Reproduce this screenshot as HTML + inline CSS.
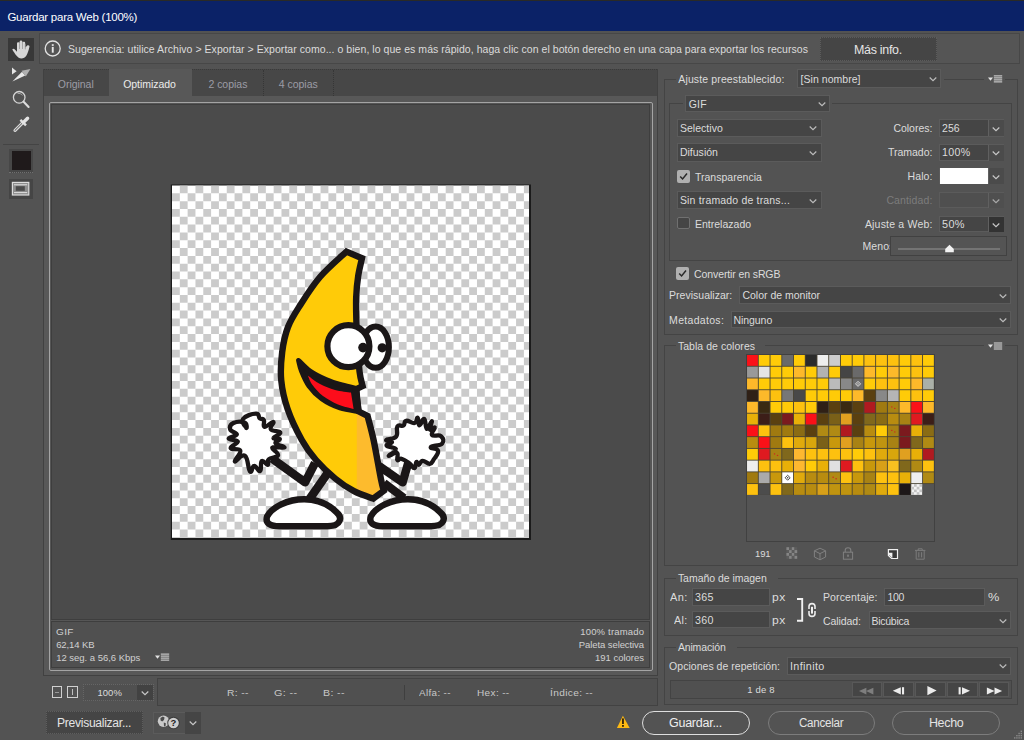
<!DOCTYPE html>
<html lang="es"><head><meta charset="utf-8"><title>Guardar para Web (100%)</title>
<style>
html,body{margin:0;padding:0;}
body{width:1024px;height:740px;overflow:hidden;background:#535353;position:relative;font-family:"Liberation Sans",sans-serif;}
#app div,#app svg.a{position:absolute;}
.t{white-space:pre;}
</style></head><body><div id="app">
<div style="left:0.0px;top:0.0px;width:1024.0px;height:30.5px;background:#0b2267;"></div>
<div style="left:0.0px;top:0.0px;width:1024.0px;height:1.0px;background:#2a2a26;"></div>
<div style="left:8.0px;top:38.0px;width:26.0px;height:22.5px;background:#383838;"></div>
<div style="left:3.2px;top:143.6px;width:35.8px;height:1.2px;background:#444444;"></div>
<div style="left:8.9px;top:148.9px;width:24.2px;height:24.5px;background:#474747;border-bottom:1px dotted #707070;box-sizing:border-box;"></div>
<div style="left:12.0px;top:151.0px;width:18.7px;height:18.8px;background:#1f1a1b;"></div>
<div style="left:8.9px;top:178.8px;width:24.2px;height:20.0px;background:#454545;"></div>
<div style="left:39.0px;top:33.0px;width:981.0px;height:31.0px;background:#555555;border:1px solid #474747;box-sizing:border-box;"></div>
<div style="left:820.0px;top:37.0px;width:117.0px;height:24.0px;background:#454545;border:1px dotted #5c5c5c;box-sizing:border-box;"></div>
<div style="left:43.3px;top:68.5px;width:614.7px;height:607.5px;background:#585858;border:1px solid #414141;box-sizing:border-box;"></div>
<div style="left:44.3px;top:69.0px;width:613.0px;height:27.0px;background:#474747;border-top:1px dotted #3a3a3a;box-sizing:border-box;"></div>
<div style="left:108.8px;top:69.0px;width:83.4px;height:27.5px;background:#585858;"></div>
<div style="left:263.3px;top:70.0px;width:1.0px;height:26.0px;border-left:1px dotted #363636;"></div>
<div style="left:333.0px;top:70.0px;width:1.0px;height:26.0px;border-left:1px dotted #363636;"></div>
<div style="left:49.0px;top:102.0px;width:603.6px;height:568.6px;background:#565656;border:1.6px solid #a4a4a4;box-sizing:border-box;border-radius:2px;"></div>
<div style="left:51.4px;top:104.4px;width:598.8px;height:515.2px;background:#4b4b4b;border:1px solid #3e3e3e;box-sizing:border-box;"></div>
<div style="left:51.4px;top:621.0px;width:598.8px;height:47.2px;background:#505050;border:1px solid #3e3e3e;box-sizing:border-box;"></div>
<svg class="a" style="left:168px;top:182px" width="366" height="361" viewBox="168 182 366 361">
<defs><clipPath id="ban"><path id="banp" d="M346.5 251.6 L362.0 258.2 C361.4 261.2 359.2 269.5 358.2 276.0 C357.2 282.5 356.5 289.3 356.2 297.0 C355.9 304.7 356.2 314.0 356.4 322.0 C356.6 330.0 357.1 336.7 357.6 345.0 C358.1 353.3 358.8 365.2 359.6 372.0 C360.4 378.8 362.1 383.7 362.6 386.0 L355.6 389.5 L358.8 411.5 L367.6 416.0 C368.6 420.2 371.6 430.4 373.8 441.0 C376.0 451.6 379.3 471.0 381.0 479.3 C382.7 487.6 383.3 488.9 383.8 490.8 L373.2 498.6 C370.0 497.4 360.3 494.5 354.0 491.2 C347.7 487.9 341.6 483.8 335.3 478.6 C329.0 473.4 321.6 466.4 316.0 460.0 C310.4 453.6 306.5 448.5 301.8 440.0 C297.1 431.5 291.0 419.0 287.6 409.0 C284.2 399.0 282.1 389.5 281.2 380.0 C280.3 370.5 281.1 360.8 282.2 352.0 C283.3 343.2 285.0 334.8 288.0 327.0 C291.0 319.2 295.0 313.3 300.3 305.0 C305.6 296.7 312.3 285.9 320.0 277.0 C327.7 268.1 342.1 255.8 346.5 251.6 Z"/></clipPath><clipPath id="imc"><rect x="172.0" y="185.5" width="357.0" height="352.3"/></clipPath></defs>
<rect x="170.8" y="184.5" width="360.2" height="355.5" fill="#1b1b1b"/>
<rect x="172.0" y="185.5" width="357.0" height="352.3" fill="#ffffff"/>
<g clip-path="url(#imc)" stroke="#cbcbcb" stroke-width="7.82" stroke-dasharray="7.82 7.82" fill="none"><path d="M172.0 189.41 H536.8" stroke-dashoffset="7.82"/><path d="M172.0 197.23 H536.8" stroke-dashoffset="0"/><path d="M172.0 205.05 H536.8" stroke-dashoffset="7.82"/><path d="M172.0 212.87 H536.8" stroke-dashoffset="0"/><path d="M172.0 220.69 H536.8" stroke-dashoffset="7.82"/><path d="M172.0 228.51 H536.8" stroke-dashoffset="0"/><path d="M172.0 236.33 H536.8" stroke-dashoffset="7.82"/><path d="M172.0 244.15 H536.8" stroke-dashoffset="0"/><path d="M172.0 251.97 H536.8" stroke-dashoffset="7.82"/><path d="M172.0 259.79 H536.8" stroke-dashoffset="0"/><path d="M172.0 267.61 H536.8" stroke-dashoffset="7.82"/><path d="M172.0 275.43 H536.8" stroke-dashoffset="0"/><path d="M172.0 283.25 H536.8" stroke-dashoffset="7.82"/><path d="M172.0 291.07 H536.8" stroke-dashoffset="0"/><path d="M172.0 298.89 H536.8" stroke-dashoffset="7.82"/><path d="M172.0 306.71 H536.8" stroke-dashoffset="0"/><path d="M172.0 314.53 H536.8" stroke-dashoffset="7.82"/><path d="M172.0 322.35 H536.8" stroke-dashoffset="0"/><path d="M172.0 330.17 H536.8" stroke-dashoffset="7.82"/><path d="M172.0 337.99 H536.8" stroke-dashoffset="0"/><path d="M172.0 345.81 H536.8" stroke-dashoffset="7.82"/><path d="M172.0 353.63 H536.8" stroke-dashoffset="0"/><path d="M172.0 361.45 H536.8" stroke-dashoffset="7.82"/><path d="M172.0 369.27 H536.8" stroke-dashoffset="0"/><path d="M172.0 377.09 H536.8" stroke-dashoffset="7.82"/><path d="M172.0 384.91 H536.8" stroke-dashoffset="0"/><path d="M172.0 392.73 H536.8" stroke-dashoffset="7.82"/><path d="M172.0 400.55 H536.8" stroke-dashoffset="0"/><path d="M172.0 408.37 H536.8" stroke-dashoffset="7.82"/><path d="M172.0 416.19 H536.8" stroke-dashoffset="0"/><path d="M172.0 424.01 H536.8" stroke-dashoffset="7.82"/><path d="M172.0 431.83 H536.8" stroke-dashoffset="0"/><path d="M172.0 439.65 H536.8" stroke-dashoffset="7.82"/><path d="M172.0 447.47 H536.8" stroke-dashoffset="0"/><path d="M172.0 455.29 H536.8" stroke-dashoffset="7.82"/><path d="M172.0 463.11 H536.8" stroke-dashoffset="0"/><path d="M172.0 470.93 H536.8" stroke-dashoffset="7.82"/><path d="M172.0 478.75 H536.8" stroke-dashoffset="0"/><path d="M172.0 486.57 H536.8" stroke-dashoffset="7.82"/><path d="M172.0 494.39 H536.8" stroke-dashoffset="0"/><path d="M172.0 502.21 H536.8" stroke-dashoffset="7.82"/><path d="M172.0 510.03 H536.8" stroke-dashoffset="0"/><path d="M172.0 517.85 H536.8" stroke-dashoffset="7.82"/><path d="M172.0 525.67 H536.8" stroke-dashoffset="0"/><path d="M172.0 533.49 H536.8" stroke-dashoffset="7.82"/><path d="M172.0 541.31 H536.8" stroke-dashoffset="0"/></g>
<g fill="none" stroke="#1a1617" stroke-width="8.4" stroke-linejoin="round" stroke-linecap="butt">
<path d="M272 458.5 L305.1 482.4 L315 463"/>
<path d="M327 474 L309.5 499"/>
<path d="M379 466 L402.6 482.4 L408.5 462"/>
<path d="M384 483 L404 498"/>
</g>
<path d="M279.2 526.2 L327.5 526.2 C341.5 526.2 342.5 517.2 336.5 512.2 C326.5 502.2 313.5 499.2 304.2 499.2 C287.2 499.2 272.2 507.2 267.2 516.2 C264.7 523.2 270.2 526.2 279.2 526.2 Z" fill="#ffffff" stroke="#1a1617" stroke-width="6.4" stroke-linejoin="round"/>
<path d="M382.9 526.2 L431.2 526.2 C445.2 526.2 446.2 517.2 440.2 512.2 C430.2 502.2 417.2 499.2 407.9 499.2 C390.9 499.2 375.9 507.2 370.9 516.2 C368.4 523.2 373.9 526.2 382.9 526.2 Z" fill="#ffffff" stroke="#1a1617" stroke-width="6.4" stroke-linejoin="round"/>
<path d="M346.5 251.6 L362.0 258.2 C361.4 261.2 359.2 269.5 358.2 276.0 C357.2 282.5 356.5 289.3 356.2 297.0 C355.9 304.7 356.2 314.0 356.4 322.0 C356.6 330.0 357.1 336.7 357.6 345.0 C358.1 353.3 358.8 365.2 359.6 372.0 C360.4 378.8 362.1 383.7 362.6 386.0 L355.6 389.5 L358.8 411.5 L367.6 416.0 C368.6 420.2 371.6 430.4 373.8 441.0 C376.0 451.6 379.3 471.0 381.0 479.3 C382.7 487.6 383.3 488.9 383.8 490.8 L373.2 498.6 C370.0 497.4 360.3 494.5 354.0 491.2 C347.7 487.9 341.6 483.8 335.3 478.6 C329.0 473.4 321.6 466.4 316.0 460.0 C310.4 453.6 306.5 448.5 301.8 440.0 C297.1 431.5 291.0 419.0 287.6 409.0 C284.2 399.0 282.1 389.5 281.2 380.0 C280.3 370.5 281.1 360.8 282.2 352.0 C283.3 343.2 285.0 334.8 288.0 327.0 C291.0 319.2 295.0 313.3 300.3 305.0 C305.6 296.7 312.3 285.9 320.0 277.0 C327.7 268.1 342.1 255.8 346.5 251.6 Z" fill="#ffcb08"/>
<rect x="356.8" y="414" width="40" height="90" fill="#fdbb2d" clip-path="url(#ban)"/>
<path d="M298.6 360.5 C300.5 362.2 305.4 367.8 310.0 371.0 C314.6 374.2 320.7 377.2 326.0 379.5 C331.3 381.8 336.8 383.5 342.0 385.0 C347.2 386.5 354.5 388.0 357.0 388.6 L358.8 411.5 C355.7 410.9 346.1 410.1 340.0 408.0 C333.9 405.9 327.2 402.7 322.0 399.0 C316.8 395.3 312.4 390.7 309.0 386.0 C305.6 381.3 303.2 375.2 301.5 371.0 C299.8 366.8 299.1 362.2 298.6 360.5 Z" fill="#1a1617" stroke="#1a1617" stroke-width="5" stroke-linejoin="round"/>
<path d="M307.8 375.4 C309.8 376.8 315.5 381.6 320.0 384.0 C324.5 386.4 329.8 388.6 335.0 390.0 C340.2 391.4 348.3 392.2 351.0 392.6 L353.6 409 C351.0 408.2 343.1 406.7 338.0 404.5 C332.9 402.3 327.2 399.2 323.0 396.0 C318.8 392.8 315.0 388.4 312.5 385.0 C310.0 381.6 308.6 377.0 307.8 375.4 Z" fill="#fd0d1b"/>
<path d="M346.5 251.6 L362.0 258.2 C361.4 261.2 359.2 269.5 358.2 276.0 C357.2 282.5 356.5 289.3 356.2 297.0 C355.9 304.7 356.2 314.0 356.4 322.0 C356.6 330.0 357.1 336.7 357.6 345.0 C358.1 353.3 358.8 365.2 359.6 372.0 C360.4 378.8 362.1 383.7 362.6 386.0 L355.6 389.5 L358.8 411.5 L367.6 416.0 C368.6 420.2 371.6 430.4 373.8 441.0 C376.0 451.6 379.3 471.0 381.0 479.3 C382.7 487.6 383.3 488.9 383.8 490.8 L373.2 498.6 C370.0 497.4 360.3 494.5 354.0 491.2 C347.7 487.9 341.6 483.8 335.3 478.6 C329.0 473.4 321.6 466.4 316.0 460.0 C310.4 453.6 306.5 448.5 301.8 440.0 C297.1 431.5 291.0 419.0 287.6 409.0 C284.2 399.0 282.1 389.5 281.2 380.0 C280.3 370.5 281.1 360.8 282.2 352.0 C283.3 343.2 285.0 334.8 288.0 327.0 C291.0 319.2 295.0 313.3 300.3 305.0 C305.6 296.7 312.3 285.9 320.0 277.0 C327.7 268.1 342.1 255.8 346.5 251.6 Z" fill="none" stroke="#1a1617" stroke-width="6.4" stroke-linejoin="miter"/>
<ellipse cx="375.6" cy="347.2" rx="13.3" ry="20.6" fill="#ffffff" stroke="#1a1617" stroke-width="6"/>
<circle cx="382.2" cy="347.8" r="4.6" fill="#1a1617"/>
<circle cx="348.4" cy="346.2" r="21" fill="#ffffff" stroke="#1a1617" stroke-width="6.2"/>
<circle cx="363" cy="347.6" r="4.8" fill="#1a1617"/>
<path d="M256.0 413.7 C259.9 413.6 258.0 417.0 259.8 418.4 C261.6 419.9 262.7 418.0 263.8 420.0 C265.0 421.9 262.4 426.4 264.6 426.8 C266.8 427.3 271.8 421.4 273.3 422.0 C274.7 422.6 269.3 426.9 270.9 429.4 C272.6 431.9 279.8 430.6 280.3 432.6 C280.9 434.6 273.6 436.5 273.5 438.0 C273.3 439.5 279.3 438.0 279.8 439.2 C280.3 440.4 274.5 441.3 275.6 443.3 C276.7 445.2 285.1 446.6 284.4 447.6 C283.7 448.6 273.9 445.8 272.4 447.6 C271.0 449.4 278.9 452.5 278.0 455.2 C277.1 457.9 271.1 457.0 268.7 459.3 C266.3 461.5 269.3 464.4 267.7 464.8 C266.1 465.2 263.6 459.6 261.8 461.0 C260.0 462.4 261.9 469.8 260.1 470.9 C258.3 472.1 256.6 465.7 254.2 465.9 C251.8 466.0 252.1 473.8 250.0 471.4 C247.8 469.1 248.4 458.1 244.9 455.7 C241.3 453.4 235.8 462.5 234.8 461.3 C233.7 460.1 241.3 453.7 240.3 450.7 C239.4 447.6 231.3 450.3 230.7 448.1 C230.1 446.0 238.3 443.8 237.8 441.5 C237.3 439.3 228.9 440.2 228.7 438.5 C228.4 436.8 236.4 436.6 236.8 434.4 C237.1 432.3 231.0 432.1 230.2 429.4 C229.4 426.7 230.1 424.6 233.4 423.0 C236.7 421.4 241.4 421.4 244.4 422.5 C247.4 423.6 246.7 428.7 246.4 427.9 C246.1 427.0 240.8 422.3 243.1 418.9 C245.3 415.6 252.1 413.8 256.0 413.7 Z" fill="#ffffff" stroke="#1a1617" stroke-width="4.3" stroke-linejoin="round"/>
<path d="M417.6 417.7 C418.8 418.3 417.9 425.0 419.4 425.3 C421.0 425.6 422.5 418.2 424.2 419.0 C426.0 419.9 425.2 428.4 426.9 428.9 C428.7 429.3 431.1 420.9 431.8 421.1 C432.5 421.2 429.3 428.1 430.0 429.6 C430.7 431.1 434.4 426.3 434.8 427.6 C435.3 428.8 430.6 432.9 432.0 435.0 C433.4 437.0 438.6 434.2 440.9 436.2 C443.3 438.2 444.5 441.0 442.1 443.6 C439.8 446.1 431.7 445.4 430.8 447.1 C429.8 448.8 437.4 448.0 438.1 450.9 C438.7 453.8 435.6 456.5 433.6 459.6 C431.7 462.6 432.3 463.5 429.8 463.8 C427.2 464.1 425.2 460.6 422.7 460.8 C420.1 461.0 420.3 464.6 418.8 464.8 C417.4 465.1 417.4 461.2 416.4 462.0 C415.4 462.8 416.0 467.8 414.4 468.1 C412.7 468.4 412.3 465.5 409.3 463.3 C406.3 461.1 404.4 459.5 401.6 458.8 C398.8 458.0 398.4 461.4 397.4 460.0 C396.3 458.6 399.0 453.9 397.0 452.9 C394.9 451.9 389.0 456.6 388.7 455.7 C388.5 454.9 396.3 451.7 395.8 449.3 C395.4 447.0 387.6 447.5 386.7 445.8 C385.8 444.1 392.1 443.6 392.0 442.2 C391.9 440.9 385.2 441.3 386.2 440.0 C387.2 438.7 393.5 439.8 396.1 436.7 C398.7 433.5 395.7 429.1 397.4 426.5 C399.1 423.9 401.4 426.9 403.4 425.5 C405.5 424.2 403.6 421.4 406.2 420.8 C408.8 420.2 411.9 423.7 414.6 423.0 C417.3 422.3 416.5 417.2 417.6 417.7 Z" fill="#ffffff" stroke="#1a1617" stroke-width="4.3" stroke-linejoin="round"/>
</svg>
<div style="left:51.5px;top:686.0px;width:10.5px;height:12.0px;border:1px solid #d0d0d0;box-sizing:border-box;"></div>
<div style="left:54.5px;top:691.5px;width:4.5px;height:1.0px;background:#9a9a9a;"></div>
<div style="left:67.0px;top:686.0px;width:10.5px;height:12.0px;border:1px solid #d0d0d0;box-sizing:border-box;"></div>
<div style="left:71.8px;top:689.0px;width:1.0px;height:6.0px;background:#c0c0c0;"></div>
<div style="left:83.0px;top:684.0px;width:70.5px;height:16.5px;background:#505050;border:1px dotted #666;box-sizing:border-box;"></div>
<div style="left:137.4px;top:684.5px;width:15.6px;height:15.5px;background:#424242;"></div>
<div style="left:157.0px;top:678.0px;width:501.0px;height:27.5px;background:#505050;border:1px solid #424242;box-sizing:border-box;"></div>
<div style="left:404.0px;top:684.5px;width:1.0px;height:15.5px;background:#3f3f3f;"></div>
<div style="left:45.8px;top:710.6px;width:97.4px;height:23.8px;background:#454545;border:1px dotted #5e5e5e;box-sizing:border-box;"></div>
<div style="left:152.6px;top:711.6px;width:48.4px;height:22.6px;background:#505050;border:1px solid #5b5b5b;box-sizing:border-box;"></div>
<div style="left:185.0px;top:712.2px;width:15.6px;height:21.4px;background:#454545;"></div>
<div style="left:663.8px;top:78.5px;width:1.0px;height:256.0px;background:#444444;"></div>
<div style="left:1017.0px;top:78.5px;width:1.0px;height:256.0px;background:#444444;"></div>
<div style="left:663.8px;top:333.5px;width:354.2px;height:1.0px;background:#444444;"></div>
<div style="left:663.8px;top:78.5px;width:11.9px;height:1.0px;background:#444444;"></div>
<div style="left:944.0px;top:78.5px;width:40.0px;height:1.0px;background:#444444;"></div>
<div style="left:1005.0px;top:78.5px;width:13.0px;height:1.0px;background:#444444;"></div>
<div style="left:669.0px;top:103.3px;width:1.0px;height:157.4px;background:#444444;"></div>
<div style="left:1011.4px;top:103.3px;width:1.0px;height:157.4px;background:#444444;"></div>
<div style="left:669.0px;top:259.7px;width:343.4px;height:1.0px;background:#444444;"></div>
<div style="left:669.0px;top:103.3px;width:14.0px;height:1.0px;background:#444444;"></div>
<div style="left:832.0px;top:103.3px;width:180.4px;height:1.0px;background:#444444;"></div>
<div style="left:663.8px;top:345.4px;width:1.0px;height:221.0px;background:#444444;"></div>
<div style="left:1017.0px;top:345.4px;width:1.0px;height:221.0px;background:#444444;"></div>
<div style="left:663.8px;top:565.4px;width:354.2px;height:1.0px;background:#444444;"></div>
<div style="left:663.8px;top:345.4px;width:11.9px;height:1.0px;background:#444444;"></div>
<div style="left:765.4px;top:345.4px;width:218.6px;height:1.0px;background:#444444;"></div>
<div style="left:1005.0px;top:345.4px;width:13.0px;height:1.0px;background:#444444;"></div>
<div style="left:663.8px;top:577.5px;width:1.0px;height:58.2px;background:#444444;"></div>
<div style="left:1017.0px;top:577.5px;width:1.0px;height:58.2px;background:#444444;"></div>
<div style="left:663.8px;top:634.7px;width:354.2px;height:1.0px;background:#444444;"></div>
<div style="left:663.8px;top:577.5px;width:11.9px;height:1.0px;background:#444444;"></div>
<div style="left:778.0px;top:577.5px;width:240.0px;height:1.0px;background:#444444;"></div>
<div style="left:663.8px;top:647.2px;width:1.0px;height:58.2px;background:#444444;"></div>
<div style="left:1017.0px;top:647.2px;width:1.0px;height:58.2px;background:#444444;"></div>
<div style="left:663.8px;top:704.4px;width:354.2px;height:1.0px;background:#444444;"></div>
<div style="left:663.8px;top:647.2px;width:11.9px;height:1.0px;background:#444444;"></div>
<div style="left:737.0px;top:647.2px;width:281.0px;height:1.0px;background:#444444;"></div>
<div style="left:796.6px;top:69.0px;width:144.8px;height:19.3px;background:#454545;border:1px solid #5b5b5b;box-sizing:border-box;"></div>
<svg class="a" style="left:928.1px;top:75.2px" width="10" height="8" viewBox="0 0 10 8"><path d="M1.7 2.5 L5 5.7 L8.3 2.5" fill="none" stroke="#bcbcbc" stroke-width="1.15"/></svg>
<div style="left:685.0px;top:94.8px;width:145.3px;height:17.6px;background:#454545;border:1px solid #5b5b5b;box-sizing:border-box;"></div>
<svg class="a" style="left:817.0px;top:100.1px" width="10" height="8" viewBox="0 0 10 8"><path d="M1.7 2.5 L5 5.7 L8.3 2.5" fill="none" stroke="#bcbcbc" stroke-width="1.15"/></svg>
<div style="left:676.5px;top:118.6px;width:145.0px;height:18.4px;background:#454545;border:1px solid #5b5b5b;box-sizing:border-box;"></div>
<svg class="a" style="left:808.2px;top:124.3px" width="10" height="8" viewBox="0 0 10 8"><path d="M1.7 2.5 L5 5.7 L8.3 2.5" fill="none" stroke="#bcbcbc" stroke-width="1.15"/></svg>
<div style="left:676.5px;top:143.2px;width:145.0px;height:18.4px;background:#454545;border:1px solid #5b5b5b;box-sizing:border-box;"></div>
<svg class="a" style="left:808.2px;top:148.9px" width="10" height="8" viewBox="0 0 10 8"><path d="M1.7 2.5 L5 5.7 L8.3 2.5" fill="none" stroke="#bcbcbc" stroke-width="1.15"/></svg>
<div style="left:676.5px;top:191.2px;width:145.0px;height:18.2px;background:#454545;border:1px solid #5b5b5b;box-sizing:border-box;"></div>
<svg class="a" style="left:808.2px;top:196.8px" width="10" height="8" viewBox="0 0 10 8"><path d="M1.7 2.5 L5 5.7 L8.3 2.5" fill="none" stroke="#bcbcbc" stroke-width="1.15"/></svg>
<div style="left:739.4px;top:286.2px;width:272.0px;height:18.2px;background:#454545;border:1px solid #5b5b5b;box-sizing:border-box;"></div>
<svg class="a" style="left:998.1px;top:291.8px" width="10" height="8" viewBox="0 0 10 8"><path d="M1.7 2.5 L5 5.7 L8.3 2.5" fill="none" stroke="#bcbcbc" stroke-width="1.15"/></svg>
<div style="left:730.6px;top:310.6px;width:280.8px;height:17.8px;background:#454545;border:1px solid #5b5b5b;box-sizing:border-box;"></div>
<svg class="a" style="left:998.1px;top:316.0px" width="10" height="8" viewBox="0 0 10 8"><path d="M1.7 2.5 L5 5.7 L8.3 2.5" fill="none" stroke="#bcbcbc" stroke-width="1.15"/></svg>
<div style="left:868.5px;top:611.4px;width:142.9px;height:18.0px;background:#454545;border:1px solid #5b5b5b;box-sizing:border-box;"></div>
<svg class="a" style="left:998.1px;top:616.9px" width="10" height="8" viewBox="0 0 10 8"><path d="M1.7 2.5 L5 5.7 L8.3 2.5" fill="none" stroke="#bcbcbc" stroke-width="1.15"/></svg>
<div style="left:786.8px;top:656.6px;width:224.6px;height:18.2px;background:#454545;border:1px solid #5b5b5b;box-sizing:border-box;"></div>
<svg class="a" style="left:998.1px;top:662.2px" width="10" height="8" viewBox="0 0 10 8"><path d="M1.7 2.5 L5 5.7 L8.3 2.5" fill="none" stroke="#bcbcbc" stroke-width="1.15"/></svg>
<div style="left:939.2px;top:119.4px;width:65.0px;height:17.4px;background:#454545;border:1px solid #5b5b5b;box-sizing:border-box;"></div>
<div style="left:988.2px;top:119.9px;width:15.5px;height:16.4px;background:#4b4b4b;border-left:1px solid #606060;box-sizing:border-box;"></div>
<svg class="a" style="left:991.2px;top:124.6px" width="10" height="8" viewBox="0 0 10 8"><path d="M1.7 2.5 L5 5.7 L8.3 2.5" fill="none" stroke="#c8c8c8" stroke-width="1.15"/></svg>
<div style="left:939.2px;top:144.0px;width:65.0px;height:17.0px;background:#454545;border:1px solid #5b5b5b;box-sizing:border-box;"></div>
<div style="left:988.2px;top:144.5px;width:15.5px;height:16.0px;background:#4b4b4b;border-left:1px solid #606060;box-sizing:border-box;"></div>
<svg class="a" style="left:991.2px;top:149.0px" width="10" height="8" viewBox="0 0 10 8"><path d="M1.7 2.5 L5 5.7 L8.3 2.5" fill="none" stroke="#c8c8c8" stroke-width="1.15"/></svg>
<div style="left:939.2px;top:167.6px;width:65.0px;height:16.8px;background:#454545;border:1px solid #5b5b5b;box-sizing:border-box;"></div>
<div style="left:988.2px;top:168.1px;width:15.5px;height:15.8px;background:#4b4b4b;border-left:1px solid #606060;box-sizing:border-box;"></div>
<svg class="a" style="left:991.2px;top:172.5px" width="10" height="8" viewBox="0 0 10 8"><path d="M1.7 2.5 L5 5.7 L8.3 2.5" fill="none" stroke="#c8c8c8" stroke-width="1.15"/></svg>
<div style="left:939.8px;top:168.0px;width:48.4px;height:16.0px;background:#ffffff;"></div>
<div style="left:939.2px;top:192.0px;width:65.0px;height:16.4px;background:#4f4f4f;border:1px solid #5b5b5b;box-sizing:border-box;"></div>
<div style="left:988.2px;top:192.5px;width:15.5px;height:15.4px;background:#4f4f4f;border-left:1px solid #606060;box-sizing:border-box;"></div>
<svg class="a" style="left:991.2px;top:196.7px" width="10" height="8" viewBox="0 0 10 8"><path d="M1.7 2.5 L5 5.7 L8.3 2.5" fill="none" stroke="#a8a8a8" stroke-width="1.15"/></svg>
<div style="left:939.2px;top:216.0px;width:65.0px;height:16.4px;background:#454545;border:1px solid #5b5b5b;box-sizing:border-box;"></div>
<div style="left:988.2px;top:216.5px;width:15.5px;height:15.4px;background:#333333;border-left:1px solid #606060;box-sizing:border-box;"></div>
<svg class="a" style="left:991.2px;top:220.7px" width="10" height="8" viewBox="0 0 10 8"><path d="M1.7 2.5 L5 5.7 L8.3 2.5" fill="none" stroke="#c8c8c8" stroke-width="1.15"/></svg>
<div style="left:890.4px;top:236.0px;width:116.4px;height:20.0px;background:#545454;border:1px solid #414141;box-sizing:border-box;"></div>
<div style="left:898.2px;top:248.2px;width:101.4px;height:1.6px;background:#747474;"></div>
<svg class="a" style="left:943.5px;top:244px" width="11" height="9" viewBox="0 0 11 9"><path d="M5.5 0.8 L9.8 5 L9.8 8.2 L1.2 8.2 L1.2 5 Z" fill="#f2f2f2"/></svg>
<div style="left:676.6px;top:170.2px;width:13.1px;height:12.4px;background:#b0b0b0;border-radius:2px;"></div>
<svg class="a" style="left:676.6px;top:170.2px" width="13" height="13" viewBox="0 0 13 13"><path d="M3.2 6.4 L5.6 8.9 L10 3.6" fill="none" stroke="#2a2a2a" stroke-width="1.5"/></svg>
<div style="left:676.6px;top:217.0px;width:13.0px;height:12.4px;background:#454545;border:1px solid #707070;border-radius:2px;box-sizing:border-box;"></div>
<div style="left:676.0px;top:267.3px;width:13.1px;height:12.4px;background:#b0b0b0;border-radius:2px;"></div>
<svg class="a" style="left:676.0px;top:267.3px" width="13" height="13" viewBox="0 0 13 13"><path d="M3.2 6.4 L5.6 8.9 L10 3.6" fill="none" stroke="#2a2a2a" stroke-width="1.5"/></svg>
<div style="left:692.1px;top:588.0px;width:77.5px;height:17.6px;background:#454545;border:1px solid #5b5b5b;box-sizing:border-box;"></div>
<div style="left:692.1px;top:610.5px;width:77.5px;height:17.7px;background:#454545;border:1px solid #5b5b5b;box-sizing:border-box;"></div>
<div style="left:883.6px;top:588.0px;width:101.0px;height:17.6px;background:#454545;border:1px solid #5b5b5b;box-sizing:border-box;"></div>
<div style="left:670.2px;top:680.4px;width:341.8px;height:19.0px;background:#505050;border:1px solid #434343;box-sizing:border-box;"></div>
<div style="left:851.9px;top:681.8px;width:30.3px;height:15.6px;background:#454545;border:1px solid #585858;box-sizing:border-box;"></div>
<div style="left:883.2px;top:681.8px;width:31.0px;height:15.6px;background:#454545;border:1px solid #585858;box-sizing:border-box;"></div>
<div style="left:915.4px;top:681.8px;width:30.6px;height:15.6px;background:#454545;border:1px solid #585858;box-sizing:border-box;"></div>
<div style="left:947.0px;top:681.8px;width:30.7px;height:15.6px;background:#454545;border:1px solid #585858;box-sizing:border-box;"></div>
<div style="left:978.9px;top:681.8px;width:30.6px;height:15.6px;background:#454545;border:1px solid #585858;box-sizing:border-box;"></div>
<div style="left:642.0px;top:710.5px;width:108.2px;height:24.4px;border:1.6px solid #dedede;box-sizing:border-box;border-radius:12.2px;"></div>
<div style="left:767.9px;top:710.5px;width:107.4px;height:24.4px;border:1.2px solid #7c7c7c;box-sizing:border-box;border-radius:12.2px;"></div>
<div style="left:892.4px;top:710.5px;width:108.0px;height:24.4px;border:1.2px solid #7c7c7c;box-sizing:border-box;border-radius:12.2px;"></div>
<svg class="a" style="left:8px;top:38px" width="26" height="22" viewBox="8 38 26 22"><path d="M12.3 49.4 C12.8 48.4 14 48.6 14.6 49.2 L17 51.8 L17 43.4 C17 41.8 19.4 41.8 19.4 43.4 L19.6 42 C19.6 40 22.4 40 22.4 42 L22.6 43.2 C22.6 41.4 25.2 41.4 25.2 43.2 L25.4 47.6 L27.2 45.6 C28.2 44.6 30 45.4 29.4 47 C28.6 50.5 27.8 53 26.6 55.2 C25.2 57.6 23.4 58.5 21.4 58.5 C19.4 58.5 17.8 57.4 16.6 55.8 C15.2 54 13.6 51.6 12.3 49.4 Z" fill="#d6d6d6"/><path d="M19.5 43.2 V49 M22.5 42.6 V49 M25.3 44 V49.4" stroke="#8c8c8c" stroke-width="0.7" fill="none"/></svg>
<svg class="a" style="left:43px;top:39px" width="20" height="20" viewBox="43 39 20 20"><circle cx="52.7" cy="48.5" r="7.5" fill="none" stroke="#e2e2e2" stroke-width="1.3"/><rect x="51.8" y="46.9" width="1.9" height="5.8" fill="#e8e8e8"/><rect x="51.8" y="44.2" width="1.9" height="1.7" fill="#e8e8e8"/></svg>
<svg class="a" style="left:10px;top:66px" width="22" height="18" viewBox="10 66 22 18"><path d="M12 67.6 L16.6 71.2 L12 74.4 Z" fill="#e4e4e4"/><path d="M12.4 81.6 L22 71.8 L25.2 75.6 Z" fill="#e8e8e8"/><path d="M21.6 70.8 L30.4 69 L25.8 76.6 Z" fill="#b0b0b0"/></svg>
<svg class="a" style="left:11px;top:89px" width="20" height="20" viewBox="11 89 20 20"><circle cx="19.2" cy="97.3" r="5.8" fill="none" stroke="#d4d4d4" stroke-width="1.3"/><path d="M23.6 101.8 L28.6 107" stroke="#dcdcdc" stroke-width="2.1" stroke-linecap="round"/><path d="M17.6 93.6 C19.4 93 21.4 93.8 22.4 95.4" stroke="#bdbdbd" stroke-width="0.8" fill="none"/></svg>
<svg class="a" style="left:11px;top:115px" width="20" height="18" viewBox="11 115 20 18"><path d="M22.4 121.6 L14.4 129.6 C13.4 130.8 14.6 132 15.8 131 L23.8 123" fill="none" stroke="#dcdcdc" stroke-width="1.2"/><path d="M20.4 119.8 L26 125.4" stroke="#e0e0e0" stroke-width="2.4"/><path d="M23.4 122.4 L27.6 118.2" stroke="#e4e4e4" stroke-width="3.4" stroke-linecap="round"/></svg>
<svg class="a" style="left:11px;top:181px" width="19" height="15" viewBox="11 181 19 15"><rect x="12.4" y="182.4" width="16.4" height="12.6" fill="#8d8d8d" stroke="#dcdcdc" stroke-width="1.2"/><rect x="14" y="184.2" width="13.2" height="1.1" fill="#d8d8d8"/><rect x="14" y="192" width="13.2" height="1.1" fill="#d8d8d8"/><rect x="15.8" y="186.2" width="9" height="4.6" fill="#4a4a4a"/></svg>
<svg class="a" style="left:986.7px;top:73.6px" width="17" height="10" viewBox="986.7 73.6 17 10"><path d="M987.7 77.0 L992.7 77.0 L990.2 80.39999999999999 Z" fill="#e2e2e2"/><rect x="993.5" y="75" width="8.4" height="1" fill="#dedede"/><rect x="993.5" y="77" width="8.4" height="1" fill="#dedede"/><rect x="993.5" y="79" width="8.4" height="1" fill="#dedede"/><rect x="993.5" y="81" width="8.4" height="1" fill="#dedede"/></svg>
<svg class="a" style="left:986.7px;top:340.5px" width="17" height="10" viewBox="986.7 340.5 17 10"><path d="M987.7 343.9 L992.7 343.9 L990.2 347.3 Z" fill="#e2e2e2"/><rect x="993.5" y="342" width="8.4" height="1" fill="#dedede"/><rect x="993.5" y="344" width="8.4" height="1" fill="#dedede"/><rect x="993.5" y="346" width="8.4" height="1" fill="#dedede"/><rect x="993.5" y="348" width="8.4" height="1" fill="#dedede"/></svg>
<svg class="a" style="left:154.4px;top:652.4px" width="17" height="10" viewBox="154.4 652.4 17 10"><path d="M155.4 655.8 L160.4 655.8 L157.9 659.1999999999999 Z" fill="#e2e2e2"/><rect x="161.20000000000002" y="654" width="8.4" height="1" fill="#dedede"/><rect x="161.20000000000002" y="656" width="8.4" height="1" fill="#dedede"/><rect x="161.20000000000002" y="658" width="8.4" height="1" fill="#dedede"/><rect x="161.20000000000002" y="660" width="8.4" height="1" fill="#dedede"/></svg>
<svg class="a" style="left:786px;top:547px" width="12" height="12" viewBox="786 547 12 12"><rect x="786.4" y="547.2" width="2.7" height="2.9" fill="#858585"/><rect x="786.4" y="550.1" width="2.7" height="2.9" fill="#5c5c5c"/><rect x="786.4" y="553.0" width="2.7" height="2.9" fill="#858585"/><rect x="786.4" y="555.9" width="2.7" height="2.9" fill="#5c5c5c"/><rect x="789.1" y="547.2" width="2.7" height="2.9" fill="#5c5c5c"/><rect x="789.1" y="550.1" width="2.7" height="2.9" fill="#858585"/><rect x="789.1" y="553.0" width="2.7" height="2.9" fill="#5c5c5c"/><rect x="789.1" y="555.9" width="2.7" height="2.9" fill="#858585"/><rect x="791.8" y="547.2" width="2.7" height="2.9" fill="#858585"/><rect x="791.8" y="550.1" width="2.7" height="2.9" fill="#5c5c5c"/><rect x="791.8" y="553.0" width="2.7" height="2.9" fill="#858585"/><rect x="791.8" y="555.9" width="2.7" height="2.9" fill="#5c5c5c"/><rect x="794.5" y="547.2" width="2.7" height="2.9" fill="#5c5c5c"/><rect x="794.5" y="550.1" width="2.7" height="2.9" fill="#858585"/><rect x="794.5" y="553.0" width="2.7" height="2.9" fill="#5c5c5c"/><rect x="794.5" y="555.9" width="2.7" height="2.9" fill="#858585"/></svg>
<svg class="a" style="left:813px;top:547px" width="14" height="14" viewBox="813 547 14 14"><path d="M820 548.2 L825.6 550.8 V557 L820 559.8 L814.4 557 V550.8 Z M814.4 550.8 L820 553.6 L825.6 550.8 M820 553.6 V559.8" fill="none" stroke="#808080" stroke-width="1"/></svg>
<svg class="a" style="left:842px;top:547px" width="12" height="14" viewBox="842 547 12 14"><rect x="843.4" y="552.2" width="9.2" height="7" fill="none" stroke="#808080" stroke-width="1"/><path d="M845.2 552 V550.2 C845.2 547 850.8 547 850.8 550.2 V552" fill="none" stroke="#808080" stroke-width="1.1"/><rect x="847.2" y="554.6" width="1.6" height="2.2" fill="#808080"/></svg>
<svg class="a" style="left:887px;top:548px" width="12" height="12" viewBox="887 548 12 12"><path d="M888.4 549.6 H897.5 V558.5 H891.6 L888.4 555.4 Z" fill="#3a3a3a" stroke="#f0f0f0" stroke-width="1.2"/><path d="M889 552.8 H892.4 V558 L889 555 Z" fill="#f0f0f0"/></svg>
<svg class="a" style="left:914px;top:547px" width="13" height="14" viewBox="914 547 13 14"><path d="M915 550.4 H925.4 M918.2 550.2 V548.8 H922.2 V550.2 M916.2 550.6 V559.2 H924.2 V550.6 M918.8 552.2 V557.4 M921.6 552.2 V557.4" fill="none" stroke="#7c7c7c" stroke-width="1"/></svg>
<svg class="a" style="left:796px;top:597px" width="22" height="26" viewBox="796 597 22 26"><path d="M797 599 H802.2 V620.8 H797" fill="none" stroke="#f0f0f0" stroke-width="1.9"/><path d="M809 609 V606.6 C809 602.6 815 602.6 815 606.6 V609 M809 611 V613.4 C809 617.4 815 617.4 815 613.4 V611" fill="none" stroke="#ececec" stroke-width="1.6"/><rect x="811" y="606.8" width="2" height="6.8" fill="#f0f0f0"/></svg>
<svg class="a" style="left:850px;top:682px" width="162" height="16" viewBox="850 682 162 16"><path d="M866.4 687.8 L859 691.0999999999999 L866.4 694.4 Z" fill="#7e7e7e"/><path d="M873.4 687.8 L866 691.0999999999999 L873.4 694.4 Z" fill="#7e7e7e"/><path d="M900.8 687.2 L892.8 690.8 L900.8 694.4 Z" fill="#ececec"/><rect x="902" y="687.2" width="2.1" height="7.2" fill="#ececec"/><path d="M927.4 686 L936.6 690.6 L927.4 695.2 Z" fill="#ececec"/><rect x="958.6" y="687.2" width="2.1" height="7.2" fill="#ececec"/><path d="M962 687.2 L970 690.8 L962 694.4 Z" fill="#ececec"/><path d="M986.9 687.4 L994.5 690.9 L986.9 694.4 Z" fill="#ececec"/><path d="M994.5 687.4 L1002.1 690.9 L994.5 694.4 Z" fill="#ececec"/></svg>
<svg class="a" style="left:156px;top:714px" width="26" height="18" viewBox="156 714 26 18"><circle cx="163.5" cy="721.2" r="5.7" fill="#c9c9c9"/><path d="M160.4 718 L162.8 716.6 L164.6 717.4 L164 720 L162.2 721.6 L160.6 720.4 Z M163.8 722.4 L165.8 723.2 L165.6 725.8 L164 726.4 Z" fill="#4a4a4a"/><circle cx="173.5" cy="723" r="6.2" fill="#3a3a3a"/><circle cx="173.5" cy="723" r="5.3" fill="#cdcdcd"/><text x="173.5" y="726.4" font-size="9.5" font-weight="bold" text-anchor="middle" fill="#1a1a1a" font-family="Liberation Sans, sans-serif">?</text></svg>
<svg class="a" style="left:187.5px;top:719px" width="10" height="8" viewBox="0 0 10 8"><path d="M1.7 2.5 L5 5.7 L8.3 2.5" fill="none" stroke="#c8c8c8" stroke-width="1.15"/></svg>
<svg class="a" style="left:140.4px;top:688.6px" width="10" height="8" viewBox="0 0 10 8"><path d="M1.7 2.5 L5 5.7 L8.3 2.5" fill="none" stroke="#c8c8c8" stroke-width="1.15"/></svg>
<svg class="a" style="left:616px;top:714px" width="15" height="15" viewBox="616 714 15 15"><path d="M622.9 715.8 L629.7 728 H616.9 Z" fill="#fdb913"/><rect x="622" y="718.4" width="1.9" height="5.6" fill="#3a2808"/><rect x="622" y="725" width="1.9" height="1.8" fill="#3a2808"/></svg>
<svg class="a" style="left:1012px;top:730px" width="12" height="10" viewBox="1012 730 12 10"><rect x="1020.6" y="737.2" width="1.4" height="1.4" fill="#8a8a8a"/><rect x="1020.6" y="735.0" width="1.4" height="1.4" fill="#8a8a8a"/><rect x="1020.6" y="732.8" width="1.4" height="1.4" fill="#8a8a8a"/><rect x="1020.6" y="730.6" width="1.4" height="1.4" fill="#8a8a8a"/><rect x="1018.4" y="737.2" width="1.4" height="1.4" fill="#8a8a8a"/><rect x="1018.4" y="735.0" width="1.4" height="1.4" fill="#8a8a8a"/><rect x="1018.4" y="732.8" width="1.4" height="1.4" fill="#8a8a8a"/><rect x="1016.2" y="737.2" width="1.4" height="1.4" fill="#8a8a8a"/><rect x="1016.2" y="735.0" width="1.4" height="1.4" fill="#8a8a8a"/><rect x="1014.0" y="737.2" width="1.4" height="1.4" fill="#8a8a8a"/></svg>
<div style="left:746.4px;top:354px;width:188.8px;height:188px;background:#545454;border:1px solid #414141;box-sizing:border-box;"></div>
<div style="left:747.1px;top:354.7px;width:187.0px;height:129.1px;background:#4a4434;"></div>
<div style="left:747.1px;top:483.3px;width:175.2px;height:11.7px;background:#4a4434;"></div>
<svg class="a" style="left:747.1px;top:354.7px" width="187.8" height="140.8" viewBox="0 0 187.76 140.82"><rect x="0.00" y="0.00" width="10.83" height="10.83" fill="#fb1118"/><rect x="11.73" y="0.00" width="10.83" height="10.83" fill="#ffcb08"/><rect x="23.47" y="0.00" width="10.83" height="10.83" fill="#ffcb08"/><rect x="35.20" y="0.00" width="10.83" height="10.83" fill="#6a6a6a"/><rect x="46.94" y="0.00" width="10.83" height="10.83" fill="#ffcb08"/><rect x="58.67" y="0.00" width="10.83" height="10.83" fill="#2b2b2b"/><rect x="70.41" y="0.00" width="10.83" height="10.83" fill="#eeeeee"/><rect x="82.14" y="0.00" width="10.83" height="10.83" fill="#cccccc"/><rect x="93.88" y="0.00" width="10.83" height="10.83" fill="#ffcb08"/><rect x="105.61" y="0.00" width="10.83" height="10.83" fill="#ffcb08"/><rect x="117.35" y="0.00" width="10.83" height="10.83" fill="#fdc10f"/><rect x="129.08" y="0.00" width="10.83" height="10.83" fill="#fdc10f"/><rect x="140.82" y="0.00" width="10.83" height="10.83" fill="#fdc10f"/><rect x="152.56" y="0.00" width="10.83" height="10.83" fill="#ffcb08"/><rect x="164.29" y="0.00" width="10.83" height="10.83" fill="#fdc10f"/><rect x="176.02" y="0.00" width="10.83" height="10.83" fill="#ffcb08"/><rect x="0.00" y="11.73" width="10.83" height="10.83" fill="#999999"/><rect x="11.73" y="11.73" width="10.83" height="10.83" fill="#e4e4e4"/><rect x="23.47" y="11.73" width="10.83" height="10.83" fill="#ffcb08"/><rect x="35.20" y="11.73" width="10.83" height="10.83" fill="#ffcb08"/><rect x="46.94" y="11.73" width="10.83" height="10.83" fill="#fdb92a"/><rect x="58.67" y="11.73" width="10.83" height="10.83" fill="#ffcb08"/><rect x="70.41" y="11.73" width="10.83" height="10.83" fill="#b2b2b2"/><rect x="82.14" y="11.73" width="10.83" height="10.83" fill="#ffcb08"/><rect x="93.88" y="11.73" width="10.83" height="10.83" fill="#454545"/><rect x="105.61" y="11.73" width="10.83" height="10.83" fill="#6a6a6a"/><rect x="117.35" y="11.73" width="10.83" height="10.83" fill="#fdb92a"/><rect x="129.08" y="11.73" width="10.83" height="10.83" fill="#ffcb08"/><rect x="140.82" y="11.73" width="10.83" height="10.83" fill="#fdb92a"/><rect x="152.56" y="11.73" width="10.83" height="10.83" fill="#ffcb08"/><rect x="164.29" y="11.73" width="10.83" height="10.83" fill="#fdc10f"/><rect x="176.02" y="11.73" width="10.83" height="10.83" fill="#ffcb08"/><rect x="0.00" y="23.47" width="10.83" height="10.83" fill="#fdb92a"/><rect x="11.73" y="23.47" width="10.83" height="10.83" fill="#ffcb08"/><rect x="23.47" y="23.47" width="10.83" height="10.83" fill="#ffcb08"/><rect x="35.20" y="23.47" width="10.83" height="10.83" fill="#ffcb08"/><rect x="46.94" y="23.47" width="10.83" height="10.83" fill="#ffcb08"/><rect x="58.67" y="23.47" width="10.83" height="10.83" fill="#ffcb08"/><rect x="70.41" y="23.47" width="10.83" height="10.83" fill="#ffcb08"/><rect x="82.14" y="23.47" width="10.83" height="10.83" fill="#bbbbbb"/><rect x="93.88" y="23.47" width="10.83" height="10.83" fill="#888888"/><rect x="105.61" y="23.47" width="10.83" height="10.83" fill="#6a6a6a"/><rect x="117.35" y="23.47" width="10.83" height="10.83" fill="#ffcb08"/><rect x="129.08" y="23.47" width="10.83" height="10.83" fill="#fdc10f"/><rect x="140.82" y="23.47" width="10.83" height="10.83" fill="#fdc10f"/><rect x="152.56" y="23.47" width="10.83" height="10.83" fill="#ffcb08"/><rect x="164.29" y="23.47" width="10.83" height="10.83" fill="#fdb92a"/><rect x="176.02" y="23.47" width="10.83" height="10.83" fill="#aab0a8"/><rect x="0.00" y="35.20" width="10.83" height="10.83" fill="#2f2016"/><rect x="11.73" y="35.20" width="10.83" height="10.83" fill="#fdb92a"/><rect x="23.47" y="35.20" width="10.83" height="10.83" fill="#fdc10f"/><rect x="35.20" y="35.20" width="10.83" height="10.83" fill="#777777"/><rect x="46.94" y="35.20" width="10.83" height="10.83" fill="#484848"/><rect x="58.67" y="35.20" width="10.83" height="10.83" fill="#ffcb08"/><rect x="70.41" y="35.20" width="10.83" height="10.83" fill="#ffcb08"/><rect x="82.14" y="35.20" width="10.83" height="10.83" fill="#ffcb08"/><rect x="93.88" y="35.20" width="10.83" height="10.83" fill="#ffcb08"/><rect x="105.61" y="35.20" width="10.83" height="10.83" fill="#fdb92a"/><rect x="117.35" y="35.20" width="10.83" height="10.83" fill="#5a4010"/><rect x="129.08" y="35.20" width="10.83" height="10.83" fill="#888888"/><rect x="140.82" y="35.20" width="10.83" height="10.83" fill="#b5b5b5"/><rect x="152.56" y="35.20" width="10.83" height="10.83" fill="#ffcb08"/><rect x="164.29" y="35.20" width="10.83" height="10.83" fill="#fdc10f"/><rect x="176.02" y="35.20" width="10.83" height="10.83" fill="#ffcb08"/><rect x="0.00" y="46.94" width="10.83" height="10.83" fill="#fdb92a"/><rect x="11.73" y="46.94" width="10.83" height="10.83" fill="#3a2a12"/><rect x="23.47" y="46.94" width="10.83" height="10.83" fill="#ffcb08"/><rect x="35.20" y="46.94" width="10.83" height="10.83" fill="#ffcb08"/><rect x="46.94" y="46.94" width="10.83" height="10.83" fill="#fdc10f"/><rect x="58.67" y="46.94" width="10.83" height="10.83" fill="#ffcb08"/><rect x="70.41" y="46.94" width="10.83" height="10.83" fill="#2f2016"/><rect x="82.14" y="46.94" width="10.83" height="10.83" fill="#5a4010"/><rect x="93.88" y="46.94" width="10.83" height="10.83" fill="#3a2a12"/><rect x="105.61" y="46.94" width="10.83" height="10.83" fill="#5a4010"/><rect x="117.35" y="46.94" width="10.83" height="10.83" fill="#b01a20"/><rect x="129.08" y="46.94" width="10.83" height="10.83" fill="#a07a10"/><rect x="140.82" y="46.94" width="10.83" height="10.83" fill="#a88214"/><rect x="152.56" y="46.94" width="10.83" height="10.83" fill="#fdb92a"/><rect x="164.29" y="46.94" width="10.83" height="10.83" fill="#fb1118"/><rect x="176.02" y="46.94" width="10.83" height="10.83" fill="#fdb92a"/><rect x="0.00" y="58.67" width="10.83" height="10.83" fill="#e8b008"/><rect x="11.73" y="58.67" width="10.83" height="10.83" fill="#3c1e18"/><rect x="23.47" y="58.67" width="10.83" height="10.83" fill="#5a4010"/><rect x="35.20" y="58.67" width="10.83" height="10.83" fill="#7b1a1e"/><rect x="46.94" y="58.67" width="10.83" height="10.83" fill="#e8b008"/><rect x="58.67" y="58.67" width="10.83" height="10.83" fill="#fb1118"/><rect x="70.41" y="58.67" width="10.83" height="10.83" fill="#5a4010"/><rect x="82.14" y="58.67" width="10.83" height="10.83" fill="#7a6018"/><rect x="93.88" y="58.67" width="10.83" height="10.83" fill="#e0a020"/><rect x="105.61" y="58.67" width="10.83" height="10.83" fill="#5a4010"/><rect x="117.35" y="58.67" width="10.83" height="10.83" fill="#80681c"/><rect x="129.08" y="58.67" width="10.83" height="10.83" fill="#8a6c14"/><rect x="140.82" y="58.67" width="10.83" height="10.83" fill="#b88c10"/><rect x="152.56" y="58.67" width="10.83" height="10.83" fill="#a88214"/><rect x="164.29" y="58.67" width="10.83" height="10.83" fill="#df1a20"/><rect x="176.02" y="58.67" width="10.83" height="10.83" fill="#3c1e18"/><rect x="0.00" y="70.41" width="10.83" height="10.83" fill="#fb1118"/><rect x="11.73" y="70.41" width="10.83" height="10.83" fill="#fdc10f"/><rect x="23.47" y="70.41" width="10.83" height="10.83" fill="#a07a10"/><rect x="35.20" y="70.41" width="10.83" height="10.83" fill="#a07a10"/><rect x="46.94" y="70.41" width="10.83" height="10.83" fill="#8a6c14"/><rect x="58.67" y="70.41" width="10.83" height="10.83" fill="#5a4010"/><rect x="70.41" y="70.41" width="10.83" height="10.83" fill="#b08a14"/><rect x="82.14" y="70.41" width="10.83" height="10.83" fill="#b08a14"/><rect x="93.88" y="70.41" width="10.83" height="10.83" fill="#b01a20"/><rect x="105.61" y="70.41" width="10.83" height="10.83" fill="#5a4010"/><rect x="117.35" y="70.41" width="10.83" height="10.83" fill="#b88c10"/><rect x="129.08" y="70.41" width="10.83" height="10.83" fill="#ffcb08"/><rect x="140.82" y="70.41" width="10.83" height="10.83" fill="#a88214"/><rect x="152.56" y="70.41" width="10.83" height="10.83" fill="#7b1a1e"/><rect x="164.29" y="70.41" width="10.83" height="10.83" fill="#e8b008"/><rect x="176.02" y="70.41" width="10.83" height="10.83" fill="#8a6c14"/><rect x="0.00" y="82.14" width="10.83" height="10.83" fill="#b88c10"/><rect x="11.73" y="82.14" width="10.83" height="10.83" fill="#fb1118"/><rect x="23.47" y="82.14" width="10.83" height="10.83" fill="#a07a10"/><rect x="35.20" y="82.14" width="10.83" height="10.83" fill="#fdc10f"/><rect x="46.94" y="82.14" width="10.83" height="10.83" fill="#e0aa0c"/><rect x="58.67" y="82.14" width="10.83" height="10.83" fill="#d8a60c"/><rect x="70.41" y="82.14" width="10.83" height="10.83" fill="#7a6018"/><rect x="82.14" y="82.14" width="10.83" height="10.83" fill="#c8980c"/><rect x="93.88" y="82.14" width="10.83" height="10.83" fill="#e0a020"/><rect x="105.61" y="82.14" width="10.83" height="10.83" fill="#a88214"/><rect x="117.35" y="82.14" width="10.83" height="10.83" fill="#c8980c"/><rect x="129.08" y="82.14" width="10.83" height="10.83" fill="#c09410"/><rect x="140.82" y="82.14" width="10.83" height="10.83" fill="#a88214"/><rect x="152.56" y="82.14" width="10.83" height="10.83" fill="#7b1a1e"/><rect x="164.29" y="82.14" width="10.83" height="10.83" fill="#80681c"/><rect x="176.02" y="82.14" width="10.83" height="10.83" fill="#b08a14"/><rect x="0.00" y="93.88" width="10.83" height="10.83" fill="#ffcb08"/><rect x="11.73" y="93.88" width="10.83" height="10.83" fill="#df1a20"/><rect x="23.47" y="93.88" width="10.83" height="10.83" fill="#a88214"/><rect x="35.20" y="93.88" width="10.83" height="10.83" fill="#80681c"/><rect x="46.94" y="93.88" width="10.83" height="10.83" fill="#fdb830"/><rect x="58.67" y="93.88" width="10.83" height="10.83" fill="#fdc10f"/><rect x="70.41" y="93.88" width="10.83" height="10.83" fill="#fdc10f"/><rect x="82.14" y="93.88" width="10.83" height="10.83" fill="#fdc10f"/><rect x="93.88" y="93.88" width="10.83" height="10.83" fill="#fdc10f"/><rect x="105.61" y="93.88" width="10.83" height="10.83" fill="#ffcb08"/><rect x="117.35" y="93.88" width="10.83" height="10.83" fill="#fdc10f"/><rect x="129.08" y="93.88" width="10.83" height="10.83" fill="#e0aa0c"/><rect x="140.82" y="93.88" width="10.83" height="10.83" fill="#d8a60c"/><rect x="152.56" y="93.88" width="10.83" height="10.83" fill="#e0a020"/><rect x="164.29" y="93.88" width="10.83" height="10.83" fill="#e8b008"/><rect x="176.02" y="93.88" width="10.83" height="10.83" fill="#b01a20"/><rect x="0.00" y="105.61" width="10.83" height="10.83" fill="#eeeeee"/><rect x="11.73" y="105.61" width="10.83" height="10.83" fill="#fdc10f"/><rect x="23.47" y="105.61" width="10.83" height="10.83" fill="#fdc10f"/><rect x="35.20" y="105.61" width="10.83" height="10.83" fill="#e8b008"/><rect x="46.94" y="105.61" width="10.83" height="10.83" fill="#fdb830"/><rect x="58.67" y="105.61" width="10.83" height="10.83" fill="#ffcb08"/><rect x="70.41" y="105.61" width="10.83" height="10.83" fill="#e8b008"/><rect x="82.14" y="105.61" width="10.83" height="10.83" fill="#e0e0e0"/><rect x="93.88" y="105.61" width="10.83" height="10.83" fill="#df1a20"/><rect x="105.61" y="105.61" width="10.83" height="10.83" fill="#fdc10f"/><rect x="117.35" y="105.61" width="10.83" height="10.83" fill="#c8980c"/><rect x="129.08" y="105.61" width="10.83" height="10.83" fill="#d8a018"/><rect x="140.82" y="105.61" width="10.83" height="10.83" fill="#f8c020"/><rect x="152.56" y="105.61" width="10.83" height="10.83" fill="#80681c"/><rect x="164.29" y="105.61" width="10.83" height="10.83" fill="#b08a14"/><rect x="176.02" y="105.61" width="10.83" height="10.83" fill="#fdc10f"/><rect x="0.00" y="117.35" width="10.83" height="10.83" fill="#a07a10"/><rect x="11.73" y="117.35" width="10.83" height="10.83" fill="#aaaaaa"/><rect x="23.47" y="117.35" width="10.83" height="10.83" fill="#c8980c"/><rect x="35.20" y="117.35" width="10.83" height="10.83" fill="#ffffff"/><rect x="46.94" y="117.35" width="10.83" height="10.83" fill="#e0aa0c"/><rect x="58.67" y="117.35" width="10.83" height="10.83" fill="#b88c10"/><rect x="70.41" y="117.35" width="10.83" height="10.83" fill="#b88c10"/><rect x="82.14" y="117.35" width="10.83" height="10.83" fill="#b08a14"/><rect x="93.88" y="117.35" width="10.83" height="10.83" fill="#fdc10f"/><rect x="105.61" y="117.35" width="10.83" height="10.83" fill="#c8980c"/><rect x="117.35" y="117.35" width="10.83" height="10.83" fill="#a88214"/><rect x="129.08" y="117.35" width="10.83" height="10.83" fill="#fdc10f"/><rect x="140.82" y="117.35" width="10.83" height="10.83" fill="#fdc10f"/><rect x="152.56" y="117.35" width="10.83" height="10.83" fill="#e8b008"/><rect x="164.29" y="117.35" width="10.83" height="10.83" fill="#eeeeee"/><rect x="176.02" y="117.35" width="10.83" height="10.83" fill="#b08a14"/><rect x="0.00" y="129.08" width="10.83" height="10.83" fill="#fdc10f"/><rect x="11.73" y="129.08" width="10.83" height="10.83" fill="#4c4c4c"/><rect x="23.47" y="129.08" width="10.83" height="10.83" fill="#fdc10f"/><rect x="35.20" y="129.08" width="10.83" height="10.83" fill="#80681c"/><rect x="46.94" y="129.08" width="10.83" height="10.83" fill="#b88c10"/><rect x="58.67" y="129.08" width="10.83" height="10.83" fill="#b88c10"/><rect x="70.41" y="129.08" width="10.83" height="10.83" fill="#d8a018"/><rect x="82.14" y="129.08" width="10.83" height="10.83" fill="#c09410"/><rect x="93.88" y="129.08" width="10.83" height="10.83" fill="#c09410"/><rect x="105.61" y="129.08" width="10.83" height="10.83" fill="#b88c10"/><rect x="117.35" y="129.08" width="10.83" height="10.83" fill="#b08a14"/><rect x="129.08" y="129.08" width="10.83" height="10.83" fill="#e0aa0c"/><rect x="140.82" y="129.08" width="10.83" height="10.83" fill="#fdc10f"/><rect x="152.56" y="129.08" width="10.83" height="10.83" fill="#1c1718"/><rect x="164.29" y="129.08" width="10.83" height="10.83" fill="#f4f4f4"/><rect x="164.29" y="131.79" width="2.71" height="2.71" fill="#c4c4c4"/><rect x="164.29" y="137.21" width="2.71" height="2.71" fill="#c4c4c4"/><rect x="167.00" y="129.08" width="2.71" height="2.71" fill="#c4c4c4"/><rect x="167.00" y="134.50" width="2.71" height="2.71" fill="#c4c4c4"/><rect x="169.71" y="131.79" width="2.71" height="2.71" fill="#c4c4c4"/><rect x="169.71" y="137.21" width="2.71" height="2.71" fill="#c4c4c4"/><rect x="172.42" y="129.08" width="2.71" height="2.71" fill="#c4c4c4"/><rect x="172.42" y="134.50" width="2.71" height="2.71" fill="#c4c4c4"/><rect x="176.02" y="129.08" width="10.83" height="10.83" fill="#545454"/><path d="M111.03 26.39 L113.53 28.89 L111.03 31.39 L108.53 28.89 Z" fill="#6a6a6a" stroke="#f0f0f0" stroke-width="0.9"/><circle cx="111.03" cy="28.89" r="0.7" fill="#f0f0f0"/><path d="M40.62 120.27 L43.12 122.77 L40.62 125.27 L38.12 122.77 Z" fill="#ffffff" stroke="#333333" stroke-width="0.9"/><circle cx="40.62" cy="122.77" r="0.7" fill="#333333"/><circle cx="144.8" cy="51.9" r="0.7" fill="#d02020"/><circle cx="147.8" cy="53.4" r="0.7" fill="#d02020"/><circle cx="144.8" cy="75.4" r="0.7" fill="#d02020"/><circle cx="147.8" cy="76.9" r="0.7" fill="#d02020"/><circle cx="27.5" cy="98.9" r="0.7" fill="#d02020"/><circle cx="30.5" cy="100.4" r="0.7" fill="#d02020"/><circle cx="86.1" cy="122.3" r="0.7" fill="#d02020"/><circle cx="89.1" cy="123.8" r="0.7" fill="#d02020"/></svg>
<div class="t" style="left:7.4px;top:10px;font-size:11.5px;line-height:14px;letter-spacing:-0.240px;color:#ffffff">Guardar para Web (100%)</div>
<div class="t" style="left:68.0px;top:42px;font-size:10.5px;line-height:14px;letter-spacing:0.048px;color:#dcdcdc">Sugerencia: utilice Archivo &gt; Exportar &gt; Exportar como... o bien, lo que es más rápido, haga clic con el botón derecho en una capa para exportar los recursos</div>
<div class="t" style="left:854.1px;top:42px;font-size:12.5px;line-height:16px;letter-spacing:-0.300px;color:#e6e6e6;transform:scaleX(0.996);transform-origin:0 0">Más info.</div>
<div class="t" style="left:57.8px;top:77px;font-size:10.5px;line-height:14px;letter-spacing:-0.035px;color:#9c9ca6">Original</div>
<div class="t" style="left:123.2px;top:77px;font-size:10.5px;line-height:14px;letter-spacing:-0.046px;color:#ececec">Optimizado</div>
<div class="t" style="left:208.4px;top:77px;font-size:10.5px;line-height:14px;letter-spacing:-0.009px;color:#9c9ca6">2 copias</div>
<div class="t" style="left:278.7px;top:77px;font-size:10.5px;line-height:14px;letter-spacing:-0.009px;color:#9c9ca6">4 copias</div>
<div class="t" style="left:678.3px;top:72px;font-size:10.5px;line-height:14px;letter-spacing:0.129px;color:#dcdcdc">Ajuste preestablecido:</div>
<div class="t" style="left:800.6px;top:72px;font-size:10.5px;line-height:14px;letter-spacing:0.038px;color:#dcdcdc">[Sin nombre]</div>
<div class="t" style="left:688.7px;top:97px;font-size:10.5px;line-height:14px;letter-spacing:0.223px;color:#dcdcdc">GIF</div>
<div class="t" style="left:679.9px;top:121px;font-size:10.5px;line-height:14px;letter-spacing:0.042px;color:#dcdcdc">Selectivo</div>
<div class="t" style="left:679.9px;top:145px;font-size:10.5px;line-height:14px;letter-spacing:0.015px;color:#dcdcdc">Difusión</div>
<div class="t" style="left:893.4px;top:121px;font-size:10.5px;line-height:14px;letter-spacing:-0.009px;color:#dcdcdc">Colores:</div>
<div class="t" style="left:942.1px;top:121px;font-size:10.5px;line-height:14px;letter-spacing:0.007px;color:#dcdcdc">256</div>
<div class="t" style="left:888.0px;top:145px;font-size:10.5px;line-height:14px;letter-spacing:-0.015px;color:#dcdcdc">Tramado:</div>
<div class="t" style="left:942.1px;top:145px;font-size:10.5px;line-height:14px;letter-spacing:0.350px;color:#dcdcdc;transform:scaleX(1.012);transform-origin:0 0">100%</div>
<div class="t" style="left:694.9px;top:170px;font-size:10.5px;line-height:14px;letter-spacing:0.018px;color:#dcdcdc">Transparencia</div>
<div class="t" style="left:907.5px;top:169px;font-size:10.5px;line-height:14px;letter-spacing:0.107px;color:#dcdcdc">Halo:</div>
<div class="t" style="left:679.9px;top:193px;font-size:10.5px;line-height:14px;letter-spacing:0.169px;color:#dcdcdc">Sin tramado de trans...</div>
<div class="t" style="left:886.4px;top:193px;font-size:10.5px;line-height:14px;letter-spacing:0.136px;color:#7c7c7c">Cantidad:</div>
<div class="t" style="left:694.9px;top:217px;font-size:10.5px;line-height:14px;letter-spacing:0.020px;color:#dcdcdc">Entrelazado</div>
<div class="t" style="left:864.9px;top:217px;font-size:10.5px;line-height:14px;letter-spacing:0.196px;color:#dcdcdc">Ajuste a Web:</div>
<div class="t" style="left:942.1px;top:217px;font-size:10.5px;line-height:14px;letter-spacing:0.350px;color:#dcdcdc;transform:scaleX(1.040);transform-origin:0 0">50%</div>
<div class="t" style="left:862.5px;top:239px;font-size:10.5px;line-height:14px;letter-spacing:0.107px;color:#dcdcdc;width:27.4px;overflow:hidden">Menos</div>
<div class="t" style="left:694.1px;top:267px;font-size:10.5px;line-height:14px;letter-spacing:-0.111px;color:#dcdcdc">Convertir en sRGB</div>
<div class="t" style="left:669.1px;top:288px;font-size:10.5px;line-height:14px;letter-spacing:0.009px;color:#dcdcdc">Previsualizar:</div>
<div class="t" style="left:742.4px;top:288px;font-size:10.5px;line-height:14px;letter-spacing:0.001px;color:#dcdcdc">Color de monitor</div>
<div class="t" style="left:669.1px;top:313px;font-size:10.5px;line-height:14px;letter-spacing:0.310px;color:#dcdcdc">Metadatos:</div>
<div class="t" style="left:733.5px;top:313px;font-size:10.5px;line-height:14px;letter-spacing:-0.063px;color:#dcdcdc">Ninguno</div>
<div class="t" style="left:677.9px;top:339px;font-size:10.5px;line-height:14px;letter-spacing:0.045px;color:#dcdcdc">Tabla de colores</div>
<div class="t" style="left:755.1px;top:547px;font-size:9.5px;line-height:13px;letter-spacing:-0.202px;color:#dcdcdc">191</div>
<div class="t" style="left:677.9px;top:571px;font-size:10.5px;line-height:14px;letter-spacing:-0.031px;color:#dcdcdc">Tamaño de imagen</div>
<div class="t" style="left:669.5px;top:590px;font-size:10.5px;line-height:14px;letter-spacing:0.350px;color:#dcdcdc;transform:scaleX(1.050);transform-origin:0 0">An:</div>
<div class="t" style="left:694.9px;top:590px;font-size:10.5px;line-height:14px;letter-spacing:0.350px;color:#dcdcdc;transform:scaleX(1.018);transform-origin:0 0">365</div>
<div class="t" style="left:771.7px;top:590px;font-size:10.5px;line-height:14px;letter-spacing:0.350px;color:#dcdcdc;transform:scaleX(1.153);transform-origin:0 0">px</div>
<div class="t" style="left:673.5px;top:613px;font-size:10.5px;line-height:14px;letter-spacing:0.350px;color:#dcdcdc;transform:scaleX(1.023);transform-origin:0 0">Al:</div>
<div class="t" style="left:694.9px;top:613px;font-size:10.5px;line-height:14px;letter-spacing:0.350px;color:#dcdcdc;transform:scaleX(1.018);transform-origin:0 0">360</div>
<div class="t" style="left:771.7px;top:613px;font-size:10.5px;line-height:14px;letter-spacing:0.350px;color:#dcdcdc;transform:scaleX(1.153);transform-origin:0 0">px</div>
<div class="t" style="left:822.9px;top:590px;font-size:10.5px;line-height:14px;letter-spacing:0.152px;color:#dcdcdc">Porcentaje:</div>
<div class="t" style="left:887.4px;top:590px;font-size:10.5px;line-height:14px;letter-spacing:-0.243px;color:#dcdcdc">100</div>
<div class="t" style="left:987.5px;top:590px;font-size:10.5px;line-height:14px;letter-spacing:0.350px;color:#dcdcdc;transform:scaleX(1.214);transform-origin:0 0">%</div>
<div class="t" style="left:822.9px;top:614px;font-size:10.5px;line-height:14px;letter-spacing:-0.069px;color:#dcdcdc">Calidad:</div>
<div class="t" style="left:871.4px;top:614px;font-size:10.5px;line-height:14px;letter-spacing:-0.237px;color:#dcdcdc">Bicúbica</div>
<div class="t" style="left:677.9px;top:640px;font-size:10.5px;line-height:14px;letter-spacing:-0.148px;color:#dcdcdc">Animación</div>
<div class="t" style="left:669.1px;top:659px;font-size:10.5px;line-height:14px;letter-spacing:0.028px;color:#dcdcdc">Opciones de repetición:</div>
<div class="t" style="left:790.2px;top:659px;font-size:10.5px;line-height:14px;letter-spacing:0.350px;color:#dcdcdc;transform:scaleX(1.026);transform-origin:0 0">Infinito</div>
<div class="t" style="left:747.3px;top:683px;font-size:9.5px;line-height:13px;letter-spacing:0.147px;color:#dcdcdc">1 de 8</div>
<div class="t" style="left:669.0px;top:715px;font-size:12.5px;line-height:16px;letter-spacing:-0.252px;color:#eeeeee">Guardar...</div>
<div class="t" style="left:798.9px;top:715px;font-size:12.5px;line-height:16px;letter-spacing:-0.300px;color:#e4e4e4;transform:scaleX(0.929);transform-origin:0 0">Cancelar</div>
<div class="t" style="left:928.9px;top:715px;font-size:12.5px;line-height:16px;letter-spacing:-0.300px;color:#e4e4e4">Hecho</div>
<div class="t" style="left:56.2px;top:625px;font-size:9.5px;line-height:13px;letter-spacing:0.350px;color:#d0d0d0;transform:scaleX(1.052);transform-origin:0 0">GIF</div>
<div class="t" style="left:56.2px;top:638px;font-size:9.5px;line-height:13px;letter-spacing:-0.106px;color:#d0d0d0">62,14 KB</div>
<div class="t" style="left:56.2px;top:651px;font-size:9.5px;line-height:13px;letter-spacing:-0.020px;color:#d0d0d0">12 seg. a 56,6 Kbps</div>
<div class="t" style="left:580.2px;top:625px;font-size:9.5px;line-height:13px;letter-spacing:0.187px;color:#d0d0d0">100% tramado</div>
<div class="t" style="left:578.8px;top:638px;font-size:9.5px;line-height:13px;letter-spacing:-0.086px;color:#d0d0d0">Paleta selectiva</div>
<div class="t" style="left:595.0px;top:651px;font-size:9.5px;line-height:13px;letter-spacing:-0.007px;color:#d0d0d0">191 colores</div>
<div class="t" style="left:97.4px;top:686px;font-size:9.5px;line-height:13px;letter-spacing:0.081px;color:#dcdcdc">100%</div>
<div class="t" style="left:227.0px;top:686px;font-size:9.5px;line-height:13px;letter-spacing:0.350px;color:#c8c8c8;transform:scaleX(1.083);transform-origin:0 0">R: --</div>
<div class="t" style="left:274.4px;top:686px;font-size:9.5px;line-height:13px;letter-spacing:0.350px;color:#c8c8c8;transform:scaleX(1.136);transform-origin:0 0">G: --</div>
<div class="t" style="left:323.4px;top:686px;font-size:9.5px;line-height:13px;letter-spacing:0.350px;color:#c8c8c8;transform:scaleX(1.114);transform-origin:0 0">B: --</div>
<div class="t" style="left:419.1px;top:686px;font-size:9.5px;line-height:13px;letter-spacing:0.350px;color:#c8c8c8;transform:scaleX(1.035);transform-origin:0 0">Alfa: --</div>
<div class="t" style="left:477.1px;top:686px;font-size:9.5px;line-height:13px;letter-spacing:0.350px;color:#c8c8c8;transform:scaleX(1.052);transform-origin:0 0">Hex: --</div>
<div class="t" style="left:550.3px;top:686px;font-size:9.5px;line-height:13px;letter-spacing:0.350px;color:#c8c8c8;transform:scaleX(1.065);transform-origin:0 0">Índice: --</div>
<div class="t" style="left:56.8px;top:715px;font-size:12.5px;line-height:16px;letter-spacing:-0.300px;color:#e4e4e4;transform:scaleX(0.969);transform-origin:0 0">Previsualizar...</div>
</div></body></html>
